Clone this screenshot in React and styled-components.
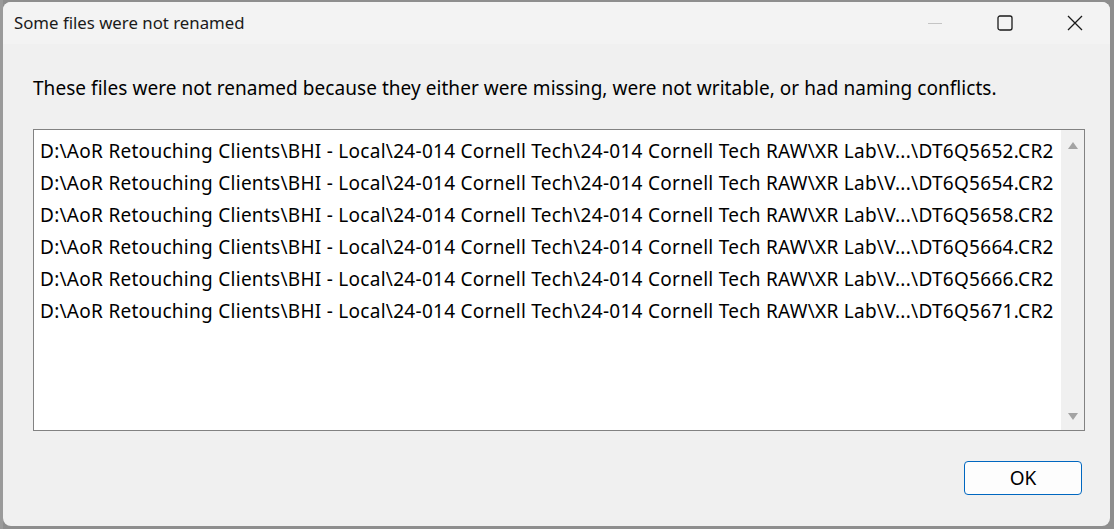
import React from 'react';
import styled, { createGlobalStyle } from 'styled-components';

const GlobalStyle = createGlobalStyle`
  html, body {
    margin: 0;
    padding: 0;
    background: #8e8e8e;
  }
  #root {
    width: 1114px;
    height: 529px;
  }
`;

const Backdrop = styled.div`
  width: 1114px;
  height: 529px;
  box-sizing: border-box;
  padding: 2px 4px 3px 3px;
  background: linear-gradient(to right, #9a9a9a 0 3px, #8e8e8e 3px);
`;

const Window = styled.div`
  height: 100%;
  display: flex;
  flex-direction: column;
  background: #f0f0f0;
  border-radius: 8px;
  overflow: hidden;
  font-family: "Noto Sans", "Open Sans", sans-serif;
  color: #000;
`;

const TitleBar = styled.div`
  height: 42px;
  flex: none;
  display: flex;
  align-items: center;
  background: #f3f3f3;
  padding-left: 11px;
`;

const Title = styled.div`
  flex: 1;
  font-size: 16.8px;
  color: #1a1a1a;
  padding-bottom: 2px;
`;

const Controls = styled.div`
  display: flex;
  height: 100%;
`;

const ControlButton = styled.div`
  width: 70px;
  height: 100%;
  display: flex;
  align-items: center;
  justify-content: center;
`;

const Body = styled.div`
  flex: 1;
  display: flex;
  flex-direction: column;
  padding: 31px 25px 0 30px;
`;

const Message = styled.div`
  font-size: 19px;
  line-height: 26px;
  letter-spacing: 0.05px;
  margin-bottom: 28px;
  white-space: nowrap;
`;

const ListBox = styled.div`
  height: 302px;
  flex: none;
  box-sizing: border-box;
  border: 1px solid #828282;
  background: #fff;
  display: flex;
`;

const Rows = styled.div`
  flex: 1;
  padding: 5px 0 0 6px;
  overflow: hidden;
`;

const Row = styled.div`
  height: 32px;
  line-height: 32px;
  font-size: 19px;
  letter-spacing: 0.28px;
  white-space: nowrap;
`;

const ScrollBar = styled.div`
  width: 23px;
  flex: none;
  background: #f0f0f0;
  display: flex;
  flex-direction: column;
  justify-content: space-between;
  align-items: center;
  padding: 12px 0 10px;
`;

const Arrow = styled.div`
  width: 0;
  height: 0;
  border-left: 5px solid transparent;
  border-right: 5px solid transparent;
  ${p => (p.$down ? 'border-top: 7px solid #a3a3a3;' : 'border-bottom: 7px solid #a3a3a3;')}
`;

const Footer = styled.div`
  display: flex;
  justify-content: flex-end;
  padding: 30px 3px 0 0;
`;

const OkButton = styled.button`
  width: 118px;
  height: 34px;
  background: #fdfdfd;
  border: 1px solid #0067c0;
  border-radius: 4px;
  font-family: inherit;
  font-size: 19px;
  color: #000;
  padding: 0;
`;

const files = [
  'DT6Q5652.CR2',
  'DT6Q5654.CR2',
  'DT6Q5658.CR2',
  'DT6Q5664.CR2',
  'DT6Q5666.CR2',
  'DT6Q5671.CR2',
];

const prefix =
  'D:\\AoR Retouching Clients\\BHI - Local\\24-014 Cornell Tech\\24-014 Cornell Tech RAW\\XR Lab\\V...\\';

export default function App() {
  return (
    <>
      <GlobalStyle />
      <Backdrop>
        <Window>
          <TitleBar>
            <Title>Some files were not renamed</Title>
            <Controls>
              <ControlButton>
                <svg width="16" height="16" viewBox="0 0 16 16">
                  <path d="M1 8.5h14" stroke="#c4c4c4" strokeWidth="1" />
                </svg>
              </ControlButton>
              <ControlButton>
                <svg width="16" height="16" viewBox="0 0 16 16">
                  <rect x="1" y="1" width="14" height="14" rx="2" fill="none" stroke="#1a1a1a" strokeWidth="1.3" />
                </svg>
              </ControlButton>
              <ControlButton>
                <svg width="16" height="16" viewBox="0 0 16 16">
                  <path d="M1 1L15 15M15 1L1 15" stroke="#1a1a1a" strokeWidth="1.3" />
                </svg>
              </ControlButton>
            </Controls>
          </TitleBar>
          <Body>
            <Message>
              These files were not renamed because they either were missing, were not writable, or had naming conflicts.
            </Message>
            <ListBox>
              <Rows>
                {files.map(f => (
                  <Row key={f}>{prefix + f}</Row>
                ))}
              </Rows>
              <ScrollBar>
                <Arrow />
                <Arrow $down />
              </ScrollBar>
            </ListBox>
            <Footer>
              <OkButton>OK</OkButton>
            </Footer>
          </Body>
        </Window>
      </Backdrop>
    </>
  );
}
